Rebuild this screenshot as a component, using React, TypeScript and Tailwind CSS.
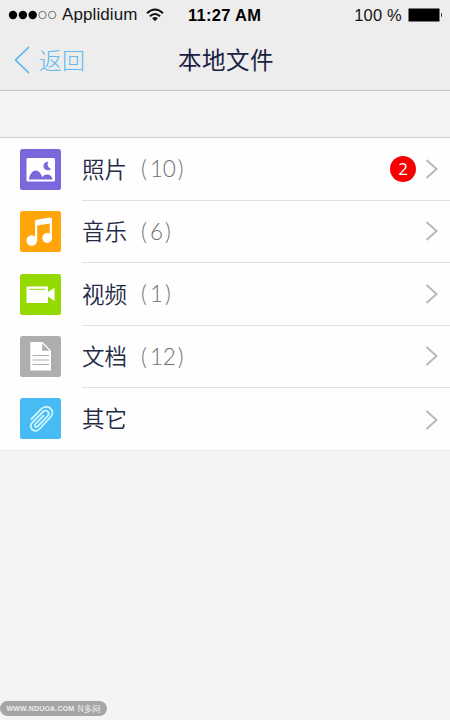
import React from "react";

const cjk = "font-['Noto_Sans_CJK_SC',sans-serif]";

function PhotoIcon() {
  return (
    <svg className="block size-[41px]" viewBox="0 0 41 41">
      <rect width="41" height="41" rx="2.5" fill="#7b67dc" />
      <rect x="6.500" y="9" width="28.500" height="23.500" rx="1.500" fill="#fff" />
      <path d="M8.800 30.500C9.500 27 11.500 21.500 15.700 21.500C19.500 21.500 21.300 25.500 22.300 28.200C23.500 26.200 25 25.500 27.500 25.500C30.500 25.500 31.800 28 32.800 30.500Z" fill="#7b67dc" />
      <path d="M28.300 12.800A4.300 4.300 0 1 0 31.200 19.700C28.200 19.500 26.500 15.500 28.300 12.800Z" fill="#7b67dc" />
    </svg>
  );
}

function MusicIcon() {
  return (
    <svg className="block size-[41px]" viewBox="0 0 41 41">
      <rect width="41" height="41" rx="2.5" fill="#ffa50a" />
      <path d="M15 10.500Q15 9 16.500 8.700L30 6.500Q32 6.500 32 8V28H29.800V12.500L17.200 14.500V30H15Z" fill="#fff" />
      <circle cx="11.700" cy="29.500" r="5.300" fill="#fff" />
      <circle cx="27.200" cy="27" r="4.900" fill="#fff" />
    </svg>
  );
}

function VideoIcon() {
  return (
    <svg className="block size-[41px]" viewBox="0 0 41 41">
      <rect width="41" height="41" rx="2.5" fill="#94d900" />
      <path d="M6.500 12.500H28V18L34.500 13.800V27L28 22.500V29H6.500Z" fill="#fff" />
      <path d="M9 15.300H25.500" stroke="#94d900" strokeWidth="1" />
    </svg>
  );
}

function DocumentIcon() {
  return (
    <svg className="block size-[41px]" viewBox="0 0 41 41">
      <rect width="41" height="41" rx="2.5" fill="#aeaeae" />
      <path d="M10.300 6H22.500L31 14.500V34.500H10.300Z" fill="#fff" />
      <path d="M22.200 7.500V14.800H29.500Z" fill="#aeaeae" />
      <path d="M12.500 19.500H29M12.500 24H29M12.500 28.500H29" stroke="#aeaeae" strokeWidth="1" />
    </svg>
  );
}

function ClipIcon() {
  return (
    <svg className="block size-[41px]" viewBox="0 0 41 41">
      <rect width="41" height="41" rx="2.500" fill="#47bcf4" />
      <path d="M11.500 21L21 11.200C24 8.200 28 8 30.500 10.500C33 13 33 16.500 30.500 19.200L19.500 31C17.500 33.200 14.300 33.500 12.300 31.500C10.300 29.500 10.300 26.800 12.300 24.700L22.800 14C24.500 12.300 26.500 12.300 27.800 13.600C29.200 15 29 16.700 27.600 18.200L18 28.200C17 29.200 16 29.200 15.300 28.500C14.500 27.800 14.700 26.900 15.500 26L23.500 17.700" fill="none" stroke="#cff6ff" strokeWidth="1.800" strokeLinecap="round" strokeLinejoin="round" />
    </svg>
  );
}

const rows = [
  { name: "照片", count: "10", badge: "2", Icon: PhotoIcon },
  { name: "音乐", count: "6", Icon: MusicIcon },
  { name: "视频", count: "1", Icon: VideoIcon },
  { name: "文档", count: "12", Icon: DocumentIcon },
  { name: "其它", Icon: ClipIcon },
];

function StatusBar() {
  return (
    <div className="grid h-[30px] grid-cols-[188px_1fr_auto] items-center pr-[7px] font-['Liberation_Sans',Arial,sans-serif] text-[17px] leading-[30px] text-[#151515]">
      <div className="flex items-center pl-[8px]">
        <svg className="block h-[10px] w-[50px]" viewBox="0 0 50 10">
          <circle cx="5" cy="5" r="4.200" fill="#000" />
          <circle cx="14.900" cy="5" r="4.200" fill="#000" />
          <circle cx="24.700" cy="5" r="4.200" fill="#000" />
          <circle cx="34.500" cy="5" r="3.700" fill="none" stroke="#555" strokeWidth=".8" />
          <circle cx="44.200" cy="5" r="3.700" fill="none" stroke="#555" strokeWidth=".8" />
        </svg>
        <span className="ml-[4px] w-[76px] text-[17px] tracking-[0.100px]">Applidium</span>
        <svg className="ml-[8px] block h-[14px] w-[18px]" viewBox="0 0 18 14">
          <path d="M1 5.200Q9-2.200 17 5.200M3.900 8.200Q9 3.700 14.100 8.200" fill="none" stroke="#111" strokeWidth="2" />
          <path d="M6.100 10.300Q9 7.800 11.900 10.300L9 13.200Z" fill="#111" />
        </svg>
      </div>
      <span className="text-[16.500px] font-bold tracking-[0.300px] text-black">11:27 AM</span>
      <div className="flex items-center gap-[6px]">
        <span className="text-[16.500px] tracking-[0.200px]">100 %</span>
        <svg className="block h-[14px] w-[35px]" viewBox="0 0 35 14">
          <rect x=".5" y=".5" width="31" height="13" rx="1" fill="#000" stroke="#777" />
          <path d="M33 4.500Q35 7 33 9.500Z" fill="#222" />
        </svg>
      </div>
    </div>
  );
}

export default function App() {
  return (
    <div className="flex h-[720px] w-[450px] flex-col overflow-hidden bg-[#f4f4f4]">
      <header className="h-[91px] border-b border-[#c6c6c6] bg-[#ededed]">
        <StatusBar />
        <div className={`grid h-[60px] grid-cols-[1fr_auto_1fr] items-center ${cjk}`}>
          <button className="flex items-center pl-[14px] text-[23px] font-light leading-[58px] text-[#65b9ec]">
            <svg className="mr-[9px] block h-[28px] w-[16px]" viewBox="0 0 16 28">
              <path d="M15 1L1.500 14L15 27" fill="none" stroke="#58b4ec" strokeWidth="1.700" />
            </svg>
            <span className="pb-[2px]">返回</span>
          </button>
          <h1 className="pb-[1px] pl-[2px] text-[23.500px] font-normal leading-[59px] tracking-[0.500px] text-[#1b1f42]">本地文件</h1>
        </div>
      </header>
      <main className="mt-[46px] border-y border-t-[#cfcfcf] border-b-[#ebebeb] bg-[#fefefe]">
        {rows.map(({ name, count, badge, Icon }, index) => (
          <div key={name} className={`flex pl-[20px] ${index < rows.length - 1 ? "h-[62.500px]" : "h-[62px]"}`}>
            <div className={`w-[62px] ${index < rows.length - 1 ? "mt-[10.500px]" : "mt-[10px]"}`}>
              <Icon />
            </div>
            <div className={`flex flex-1 items-center pr-[12px] ${index < rows.length - 1 ? "border-b border-[#e0e0e0]" : ""}`}>
              <span className={`text-[22.500px] font-[350] text-[#242944] ${cjk} ${index < rows.length - 1 ? "pb-[2px] leading-[58px]" : "pb-[4px] leading-[56px]"}`}>{name}</span>
              {count && (
                <span className="ml-[14px] flex items-center pt-[1px] font-['Lato',sans-serif] text-[22.500px] font-light leading-[58px] text-[#707070]">
                  <span className="w-[8px]">(</span>
                  <span className="ml-[1px] tracking-[-0.300px]">{count}</span>
                  <span className="w-[8px] text-right">)</span>
                </span>
              )}
              <div className={`ml-auto flex items-center ${index < rows.length - 1 ? "" : "pt-[2px]"}`}>
                {badge && (
                  <span className="mr-[9px] flex size-[26px] items-center justify-center rounded-full bg-[#f80000] font-['Open_Sans',sans-serif] text-[17px] font-normal leading-none text-white">{badge}</span>
                )}
                <svg className="block h-[20px] w-[13px]" viewBox="0 0 13 20">
                  <path d="M1.500 1L11.500 10L1.500 19" fill="none" stroke="#b9b9b9" strokeWidth="2" />
                </svg>
              </div>
            </div>
          </div>
        ))}
      </main>
      <footer className="mt-auto mb-[4px] flex h-[15px] w-[107px] items-center justify-center gap-[3px] rounded-full bg-[#a5a5a5] text-[#ededed]">
        <span className="font-['Liberation_Sans',Arial,sans-serif] text-[7px] font-bold leading-none tracking-[0.200px]">WWW.NDUOA.COM</span>
        <span className={`text-[8.500px] leading-none ${cjk}`}>N多网</span>
      </footer>
    </div>
  );
}
